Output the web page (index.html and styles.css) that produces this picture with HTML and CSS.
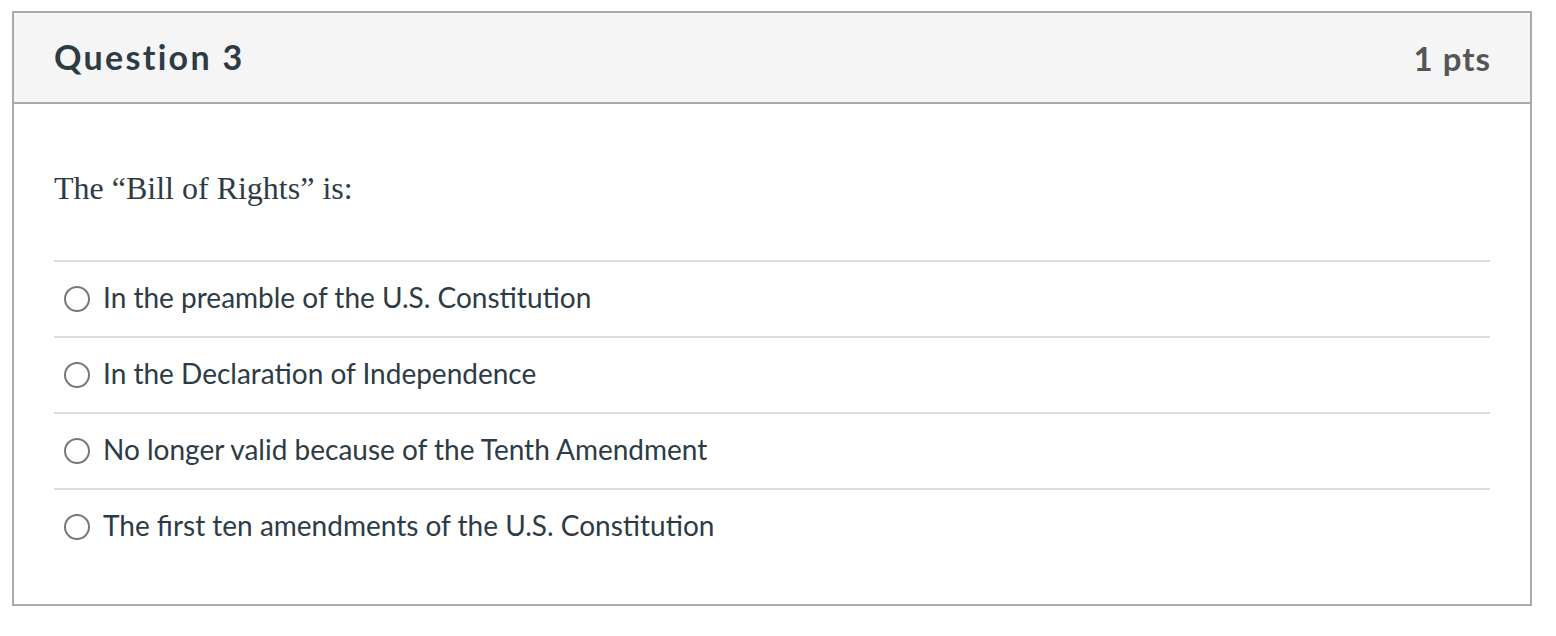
FILE: index.html
```html
<!DOCTYPE html>
<html lang="en">
<head>
<meta charset="utf-8">
<title>Question 3</title>
<link rel="stylesheet" href="styles.css">
</head>
<body>
<div class="question">
  <div class="question-header">
    <h2 class="question-title">Question 3</h2>
    <span class="question-points">1 pts</span>
  </div>
  <div class="question-body">
    <p class="question-text">The “Bill of Rights” is:</p>
    <div class="answers">
      <label class="answer"><span class="radio"></span><span class="answer-label">In the preamble of the U.S. Constitution</span></label>
      <label class="answer"><span class="radio"></span><span class="answer-label">In the Declaration of Independence</span></label>
      <label class="answer"><span class="radio"></span><span class="answer-label">No longer valid because of the Tenth Amendment</span></label>
      <label class="answer"><span class="radio"></span><span class="answer-label">The first ten amendments of the U.S. Constitution</span></label>
    </div>
  </div>
</div>
</body>
</html>
```

FILE: styles.css
```css
html, body {
  margin: 0;
  padding: 0;
  background: #ffffff;
}

body {
  padding: 11px 24px 0 12px;
  font-family: Lato, "Noto Sans", sans-serif;
  color: #2d3b45;
}

.question {
  width: 1516px;
  border: 2px solid #aaaaaa;
  background: #ffffff;
}

.question-header {
  display: flex;
  align-items: center;
  justify-content: space-between;
  height: 89px;
  padding: 0 40px;
  background: #f5f5f5;
  border-bottom: 2px solid #aaaaaa;
}

.question-title {
  margin: 0 0 2px;
  font-size: 34px;
  font-weight: 700;
  letter-spacing: 2.3px;
  color: #2d3b45;
}

.question-points {
  font-size: 33px;
  font-weight: 700;
  letter-spacing: 1px;
  margin-right: -1px;
  color: #555555;
}

.question-body {
  padding: 60px 40px 40px;
}

.question-text {
  margin: 0 0 48px;
  font-family: "Liberation Serif", "Times New Roman", serif;
  font-size: 32px;
  line-height: 48px;
  color: #2d3b45;
}

.answer {
  display: flex;
  align-items: center;
  height: 74px;
  border-top: 2px solid #dddddd;
}

.radio {
  box-sizing: border-box;
  width: 26px;
  height: 26px;
  margin-left: 10px;
  margin-right: 13px;
  border: 2px solid #777777;
  border-radius: 50%;
  background: #ffffff;
  flex: none;
}

.answer-label {
  margin-bottom: 5px;
  font-size: 28px;
  color: #2d3b45;
}
```
